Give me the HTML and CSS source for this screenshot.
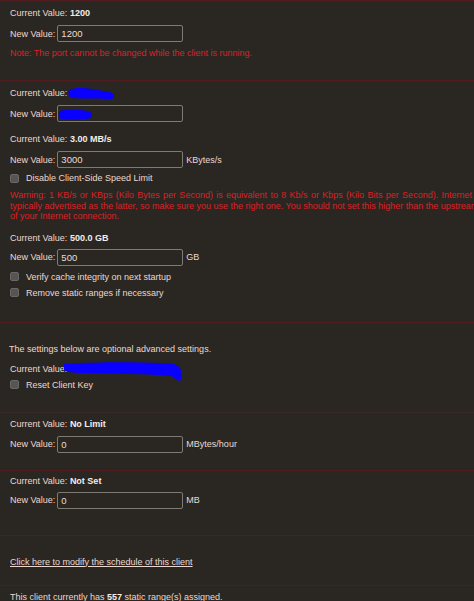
FILE: index.html
```
<!DOCTYPE html>
<html>
<head>
<meta charset="utf-8">
<link rel="stylesheet" href="styles.css">
</head>
<body>
<div class="page">
  <section class="row r1">
    <div class="line">Current Value: <b>1200</b></div>
    <div class="field mt6"><span class="lbl">New Value:</span><input class="box" type="text" value="1200"></div>
    <div class="note mt5">Note: The port cannot be changed while the client is running.</div>
  </section>

  <section class="row r2">
    <div class="line rel">Current Value:<svg class="scrib1" width="48" height="14" viewBox="0 0 48 14"><path d="M1 3 C8 0 20 1 30 3 C38 4 44 5 46 8 C47 11 44 13 38 12 C28 11 14 12 4 11 C0 10 0 5 1 3 Z" fill="#0a00ff"/></svg></div>
    <div class="field mt6"><span class="lbl">New Value:</span><span class="boxwrap"><input class="box" type="text" value=""><svg class="scrib2" width="36" height="13" viewBox="0 0 36 13"><path d="M2 3 C10 1 22 2 30 3 C34 4 35 8 33 10 C26 12 12 12 3 11 C0 9 0 5 2 3 Z" fill="#0a00ff"/></svg></span></div>

    <div class="line mt11">Current Value: <b>3.00 MB/s</b></div>
    <div class="field mt6"><span class="lbl">New Value:</span><input class="box" type="text" value="3000"><span class="unit">KBytes/s</span></div>
    <label class="check mt4"><input type="checkbox" class="cb">Disable Client-Side Speed Limit</label>
    <div class="warning mt6">
      <span class="wl j">Warning: 1 KB/s or KBps (Kilo Bytes per Second) is equivalent to 8 Kb/s or Kbps (Kilo Bits per Second). Internet</span>
      <span class="wl">typically advertised as the latter, so make sure you use the right one. You should not set this higher than the upstream</span>
      <span class="wl">of your Internet connection.</span>
    </div>

    <div class="line mt10">Current Value: <b>500.0 GB</b></div>
    <div class="field mt5"><span class="lbl">New Value:</span><input class="box" type="text" value="500"><span class="unit">GB</span></div>
    <label class="check mt5"><input type="checkbox" class="cb">Verify cache integrity on next startup</label>
    <label class="check mt4"><input type="checkbox" class="cb">Remove static ranges if necessary</label>
  </section>

  <section class="row r3">
    <div class="line intro">The settings below are optional advanced settings.</div>
    <div class="line rel mt8">Current Value.<svg class="scrib3" width="120" height="20" viewBox="0 0 120 20"><path d="M1 2 C30 0 70 0 100 1 C108 1 114 2 117 6 C119 10 119 16 117 19 C114 19 112 16 108 14 C90 12 50 12 20 11 C10 11 3 10 1 8 Z" fill="#0a00ff"/></svg></div>
    <label class="check mt4"><input type="checkbox" class="cb">Reset Client Key</label>
  </section>

  <section class="row faint r4">
    <div class="line">Current Value: <b>No Limit</b></div>
    <div class="field mt6"><span class="lbl">New Value:</span><input class="box" type="text" value="0"><span class="unit">MBytes/hour</span></div>
  </section>

  <section class="row r5">
    <div class="line">Current Value: <b>Not Set</b></div>
    <div class="field mt5"><span class="lbl">New Value:</span><input class="box" type="text" value="0"><span class="unit">MB</span></div>
  </section>

  <section class="row faint r6">
    <div class="line"><a class="link" href="#">Click here to modify the schedule of this client</a></div>
  </section>

  <section class="row r7">
    <div class="line">This client currently has <b>557</b> static range(s) assigned.</div>
  </section>
</div>
</body>
</html>
```

FILE: styles.css
```
html, body {
  margin: 0;
  padding: 0;
  overflow: hidden;
  background: #2a2722;
}
body {
  font-family: "Liberation Sans", Arial, sans-serif;
  font-size: 9px;
  color: #ecd8cf;
}
.page {
  width: 474px;
  display: flex;
  flex-direction: column;
}
.row {
  border-top: 1px solid #511c1f;
  padding: 6px 10px 0 10px;
  display: flex;
  flex-direction: column;
}
.row.faint {
  border-top-color: #3a2826;
}
.r1 { padding-bottom: 21px; }
.r2 { padding-bottom: 23px; }
.r3 { padding-top: 20px; padding-bottom: 21px; }
.r4 { padding-top: 5px; padding-bottom: 17px; }
.r5 { padding-top: 4px; padding-bottom: 26px; }
.r6 { padding-top: 20px; padding-bottom: 17px; }
.r7 { padding-top: 5px; }

.line {
  display: block;
  line-height: 12px;
  height: 12px;
  white-space: nowrap;
}
.line.rel {
  position: relative;
}
.line b {
  color: #f6ede8;
}
.intro { margin-left: -1px; }

.mt4 { margin-top: 4px; }
.mt5 { margin-top: 5px; }
.mt6 { margin-top: 6px; }
.mt8 { margin-top: 8px; }
.mt10 { margin-top: 10px; }
.mt11 { margin-top: 11px; }

.field {
  display: flex;
  align-items: center;
  height: 17px;
  white-space: nowrap;
}
.lbl {
  margin-right: 2px;
}
.unit {
  margin-left: 3px;
  color: #ecd8cf;
}
.box {
  box-sizing: border-box;
  width: 126px;
  height: 17px;
  margin: 0;
  padding: 0 3px;
  border: 1px solid #7f7a73;
  border-radius: 2px;
  background: #2a2722;
  color: #ecdcd4;
  font-family: "Liberation Sans", Arial, sans-serif;
  font-size: 9.5px;
  outline: none;
}
.boxwrap {
  position: relative;
  display: inline-flex;
}
.scrib2 {
  position: absolute;
  left: 1px;
  top: 3px;
}
.scrib1 {
  position: absolute;
  left: 58px;
  top: 0;
}
.scrib3 {
  position: absolute;
  left: 53px;
  top: -1px;
}

.note {
  color: #d8232a;
  line-height: 12px;
  white-space: nowrap;
}

.check {
  display: flex;
  align-items: center;
  height: 12px;
  line-height: 12px;
  white-space: nowrap;
}
.cb {
  -webkit-appearance: none;
  appearance: none;
  box-sizing: border-box;
  width: 9px;
  height: 9px;
  margin: 0 7px 0 0;
  border: 1px solid #6b6967;
  border-radius: 2px;
  background: #575553;
}

.warning {
  color: #dd2126;
  display: flex;
  flex-direction: column;
}
.wl {
  display: block;
  white-space: nowrap;
  line-height: 10.5px;
  height: 10.5px;
}
.wl.j {
  width: 462px;
  text-align: justify;
  text-align-last: justify;
}

.link {
  color: #ecd8cf;
  text-decoration: underline;
}
```
